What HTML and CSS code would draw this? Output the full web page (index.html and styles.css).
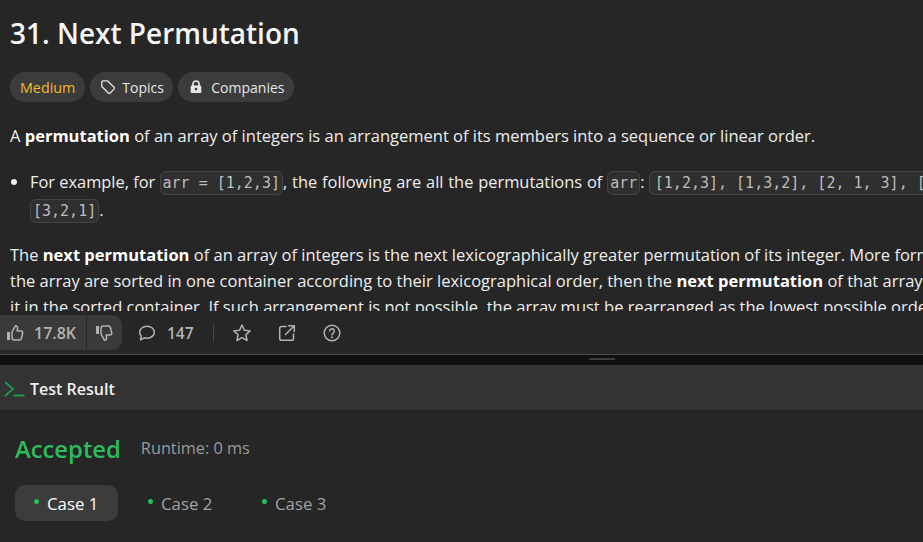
FILE: index.html
```html
<!DOCTYPE html>
<html lang="en">
<head>
<meta charset="utf-8">
<title>31. Next Permutation</title>
<link rel="stylesheet" href="styles.css">
</head>
<body>
<section class="description">
  <div class="scroll">
    <h1 class="title">31. Next Permutation</h1>
    <div class="tags">
      <span class="tag medium">Medium</span>
      <span class="tag topics">
        <svg class="tag-icon" viewBox="0 0 16 16" width="16" height="16"><path d="M1.800 2.900a1.100 1.100 0 0 1 1.100-1.100h4.600l6.500 6.500a1.300 1.300 0 0 1 0 1.800l-3.900 3.900a1.300 1.300 0 0 1-1.800 0L1.800 7.500z" fill="none" stroke="currentColor" stroke-width="1.300" stroke-linejoin="round"/></svg>
        Topics
      </span>
      <span class="tag companies">
        <svg class="tag-icon" viewBox="0 0 16 16" width="16" height="16"><path d="M5 7V5a3 3 0 0 1 6 0v2" fill="none" stroke="currentColor" stroke-width="1.700"/><path fill-rule="evenodd" d="M3.800 6.400h8.400a1.100 1.100 0 0 1 1.100 1.100v5.400a1.100 1.100 0 0 1-1.100 1.100H3.800a1.100 1.100 0 0 1-1.100-1.100V7.500a1.100 1.100 0 0 1 1.100-1.100zM8 8.800a1.300 1.300 0 1 0 0 2.600 1.300 1.300 0 0 0 0-2.600z" fill="currentColor"/></svg>
        Companies
      </span>
    </div>
    <p class="para first">A <strong>permutation</strong> of an array of integers is an arrangement of its members into a sequence or linear order.</p>
    <ul class="list">
      <li>
        <span class="line">For example, for <code>arr = [1,2,3]</code><span class="loose">, the following are all the permutations of </span><code>arr</code>: <code class="seq">[1,2,3], [1,3,2], [2, 1, 3], [2, 3, 1], [3,1,2],</code></span>
        <span class="line"><code>[3,2,1]</code>.</span>
      </li>
    </ul>
    <p class="para">
      <span class="line">The <strong>next permutation</strong> of an array of integers is the next lexicographically greater permutation of its integer. More formally, if all the permutations of</span>
      <span class="line">the array are sorted in one container according to their lexicographical order, then the <strong>next permutation</strong> of that array is the permutation that follows</span>
      <span class="line">it in the sorted container. If such arrangement is not possible, the array must be rearranged as the lowest possible order (i.e., sorted in ascending order).</span>
    </p>
  </div>
  <div class="toolbar">
    <div class="votes">
      <span class="vote up">
        <svg viewBox="0 0 20 20" width="20" height="20"><path d="M2 9h3v8H2.800A.8.8 0 0 1 2 16.200z" fill="currentColor"/><path d="M7 9l3.400-6.200c1.500 0 2.400 1 2.200 2.400L12.200 8h4a1.600 1.600 0 0 1 1.500 2l-1.300 5.500a1.900 1.900 0 0 1-1.900 1.500H9.200A2.200 2.200 0 0 1 7 14.800z" fill="none" stroke="currentColor" stroke-width="1.500" stroke-linejoin="round"/></svg>
        <span>17.8K</span>
      </span>
      <span class="vote down">
        <svg viewBox="0 0 20 20" width="20" height="20"><path d="M2 3h3v8H2.800A.8.8 0 0 1 2 10.200z" fill="currentColor"/><path d="M7 11l3.400 6.200c1.500 0 2.400-1 2.200-2.400l-.4-2.800h4a1.600 1.600 0 0 0 1.500-2l-1.300-5.500A1.900 1.900 0 0 0 14.500 3H9.200A2.200 2.200 0 0 0 7 5.200z" fill="none" stroke="currentColor" stroke-width="1.500" stroke-linejoin="round"/></svg>
      </span>
    </div>
    <span class="comments">
      <svg viewBox="0 0 20 20" width="20" height="20"><path d="M10 3.200c4.300 0 7.300 2.700 7.300 6s-3 6-7.300 6c-1 0-1.900-.1-2.700-.4L3.500 16.800l.9-3.600C3.300 12.100 2.700 10.700 2.700 9.200c0-3.300 3-6 7.300-6z" fill="none" stroke="currentColor" stroke-width="1.500" stroke-linejoin="round"/></svg>
      <span>147</span>
    </span>
    <span class="divider"></span>
    <svg class="tool-icon" viewBox="0 0 20 20" width="20" height="20"><path d="M10 2l2.400 5.300 5.800.6-4.300 3.900 1.200 5.700L10 14.600l-5.100 2.900 1.200-5.700-4.300-3.900 5.800-.6z" fill="none" stroke="currentColor" stroke-width="1.500" stroke-linejoin="round"/></svg>
    <svg class="tool-icon" viewBox="0 0 20 20" width="20" height="20"><path d="M9 3.500H4.500A1.800 1.800 0 0 0 2.700 5.300v10.200a1.800 1.800 0 0 0 1.800 1.800h10.200a1.800 1.800 0 0 0 1.800-1.800V11M11.500 2.700h5.800v5.800M17.300 2.700L8.500 11.500" fill="none" stroke="currentColor" stroke-width="1.500" stroke-linecap="round" stroke-linejoin="round"/></svg>
    <svg class="tool-icon" viewBox="0 0 20 20" width="20" height="20"><circle cx="10" cy="10" r="7.800" fill="none" stroke="currentColor" stroke-width="1.500"/><path d="M7.700 8a2.300 2.300 0 1 1 3.600 1.900c-.9.600-1.300 1-1.300 2" fill="none" stroke="currentColor" stroke-width="1.500" stroke-linecap="round"/><circle cx="10" cy="14.300" r="1" fill="currentColor"/></svg>
  </div>
</section>
<div class="resizer"><span class="grip"></span></div>
<section class="result">
  <header class="result-head">
    <svg viewBox="0 0 24 16" width="24" height="16"><path d="M1 1L9 8l-8 7M9.500 14.500h11" fill="none" stroke="#1a9c4a" stroke-width="1.800"/></svg>
    <span>Test Result</span>
  </header>
  <div class="result-body">
    <div class="verdict">
      <span class="accepted">Accepted</span>
      <span class="runtime">Runtime: 0 ms</span>
    </div>
    <div class="cases">
      <span class="case active"><i class="dot"></i>Case 1</span>
      <span class="case"><i class="dot"></i>Case 2</span>
      <span class="case"><i class="dot"></i>Case 3</span>
    </div>
  </div>
</section>
</body>
</html>
```
FILE: styles.css
```css
* { box-sizing: border-box; }
html, body { margin: 0; height: 100%; }
body {
  width: 923px;
  height: 542px;
  overflow: hidden;
  display: flex;
  flex-direction: column;
  background: #0f0f0f;
  color: #f2f2f2;
  font-family: "Open Sans", "Noto Sans", sans-serif;
}
.description {
  height: 355px;
  background: #262626;
  border-bottom: 1px solid #4d4d4d;
  display: flex;
  flex-direction: column;
}
.scroll {
  height: 311px;
  overflow: hidden;
  padding: 13px 0 0 10px;
  white-space: nowrap;
}
.title {
  margin: 0;
  font-size: 28px;
  line-height: 40px;
  font-weight: 600;
  color: #f5f5f5;
}
.tags { display: flex; gap: 5px; margin-top: 19px; }
.tag {
  display: inline-flex;
  align-items: center;
  gap: 6px;
  height: 30px;
  padding: 0 10px;
  border-radius: 15px;
  background: #3c3c3c;
  font-size: 14px;
  color: #e6e6e6;
}
.medium { color: #f5b82e; font-size: 14.3px; }
.topics { width: 83px; }
.companies { gap: 7px; width: 116px; }
.tag-icon { flex: none; }
.para { margin: 18px 0 0; font-size: 16.5px; line-height: 26px; color: #eeeeee; }
.para.first { margin-top: 21px; }
.line { display: block; }
strong { font-weight: 700; color: #ffffff; }
.list { margin: 19px 0 0; padding: 0 0 0 20px; font-size: 16.4px; line-height: 28px; color: #eeeeee; }
.loose { word-spacing: 0.6px; }
code {
  font-family: "DejaVu Sans Mono", monospace;
  font-size: 15px;
  line-height: 1;
  color: #bdbdbd;
  padding: 2px 2px;
  background: #2f2f2f;
  border: 1px solid #444444;
  border-radius: 6px;
}
code.seq { padding-left: 5px; }
.toolbar {
  flex: 1;
  display: flex;
  align-items: center;
  color: #b3b3b3;
}
.votes {
  display: flex;
  align-items: center;
  height: 35px;
  background: #3a3a3a;
  border-radius: 0 10px 10px 0;
}
.vote { display: flex; align-items: center; height: 100%; }
.vote svg { flex: none; }
.up { gap: 9px; width: 87px; padding-left: 5px; border-right: 1px solid #262626; font-size: 16px; font-weight: 600; }
.down { width: 35px; padding-left: 7px; }
.comments { display: flex; align-items: center; gap: 10px; margin-left: 15px; font-size: 15.5px; font-weight: 600; }
.divider { width: 1px; height: 19px; margin: 0 18px 0 19px; background: #444444; }
.tool-icon { flex: none; margin-right: 25px; }
.resizer {
  height: 10px;
  padding-left: 589px;
  background: #0f0f0f;
}
.grip { display: block; width: 26px; height: 2px; margin-top: 3px; background: #3c3c3c; }
.result { flex: 1; display: flex; flex-direction: column; background: #262626; }
.result-head {
  height: 45px;
  display: flex;
  align-items: center;
  gap: 2px;
  padding: 2px 0 0 4px;
  background: #333333;
  font-size: 16px;
  font-weight: 600;
  color: #f0f0f0;
}
.result-body { padding: 19px 0 0 15px; }
.verdict { display: flex; align-items: center; gap: 20px; height: 38px; }
.accepted { margin-top: 2px; color: #2cbb5d; font-size: 23.8px; font-weight: 600; }
.runtime { color: #9a9a9a; font-size: 16.3px; }
.cases { display: flex; margin-top: 18px; }
.case {
  display: flex;
  align-items: center;
  gap: 8px;
  width: 103px;
  height: 36px;
  padding-left: 19px;
  border-radius: 10px;
  font-size: 16.8px;
  font-weight: 500;
  color: #a3a3a3;
  margin-right: 11px;
}
.case.active { background: #3c3c3c; color: #ffffff; }
.dot { width: 5px; height: 5px; margin-top: -4px; border-radius: 50%; background: #2cbb5d; }
```
